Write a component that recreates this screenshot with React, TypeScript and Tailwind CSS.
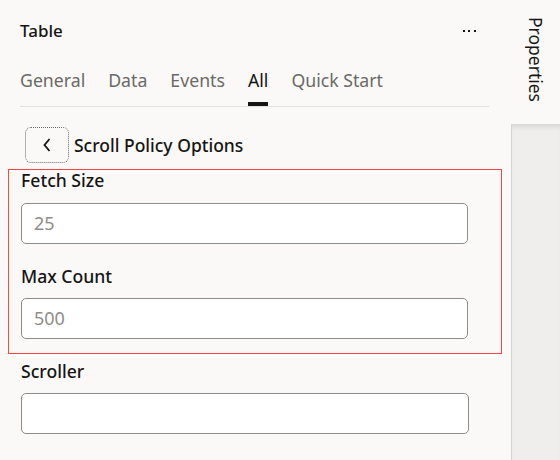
import React from "react";

const font = { fontFamily: '"Noto Sans", "Open Sans", Arial, sans-serif' };

export default function App() {
  const tabs = ["General", "Data", "Events", "All", "Quick Start"];
  return (
    <div className="w-[560px] h-[460px] flex bg-[#faf9f8] overflow-hidden text-[#161513]" style={font}>
      <div className="w-[511px] shrink-0 pl-5 pr-[22px] pt-[19px]">
        <div className="flex items-center justify-between h-[24px]">
          <div className="text-[17px] leading-[24px] font-medium">Table</div>
          <div className="w-[40px] h-[24px] flex items-center justify-center gap-[3.5px]">
            <span className="w-[2px] h-[2px] bg-[#161513]" />
            <span className="w-[2px] h-[2px] bg-[#161513]" />
            <span className="w-[2px] h-[2px] bg-[#161513]" />
          </div>
        </div>
        <div className="mt-[20px] flex gap-[23px] border-b border-[#e2e0dd]">
          {tabs.map((t) => (
            <div key={t} className="relative h-[43px] pt-[5px]">
              <span className={`text-[17.7px] leading-[24px] ${t === "All" ? "text-[#161513]" : "text-[#6b6966]"}`}>{t}</span>
              {t === "All" && <span className="absolute left-0 right-0 bottom-0 h-[4px] bg-[#161513]" />}
            </div>
          ))}
        </div>
        <div className="mt-[20px] flex items-center gap-[5px] pl-[5px]">
          <div className="w-[44px] h-[36px] rounded-[6px] border border-dotted border-[#6b6966] flex items-center justify-center">
            <svg width="10" height="16" viewBox="0 0 10 16">
              <polyline points="7.5,2 2.5,8 7.5,14" fill="none" stroke="#161513" strokeWidth="1.8" strokeLinejoin="miter" />
            </svg>
          </div>
          <div className="text-[17.5px] leading-[24px] font-medium">Scroll Policy Options</div>
        </div>
        <div className="mt-[6px] ml-[-12px] mr-[-13px] border border-[#ff4444] pl-[12px] pr-[33px] pb-[14px]">
          <div className="text-[17.6px] leading-[20px] font-medium">Fetch Size</div>
          <div className="mt-[13px] h-[41px] rounded-[5px] border border-[#8f8d8b] bg-white flex items-center pl-[12px] text-[18px] text-[#8f8c89]">25</div>
          <div className="mt-[22px] text-[17.6px] leading-[20px] font-medium">Max Count</div>
          <div className="mt-[12px] h-[41px] rounded-[5px] border border-[#8f8d8b] bg-white flex items-center pl-[12px] text-[18px] text-[#8f8c89]">500</div>
        </div>
        <div className="pl-[1px] pr-[20px]">
          <div className="mt-[7px] text-[17.6px] leading-[20px] font-medium">Scroller</div>
          <div className="mt-[12px] h-[41px] rounded-[5px] border border-[#8f8d8b] bg-white" />
        </div>
      </div>
      <div className="flex-1 flex flex-col">
        <div className="h-[124px] flex justify-center pt-[17px]">
          <div className="text-[17.5px] leading-[20px] [writing-mode:vertical-rl]">Properties</div>
        </div>
        <div className="flex-1 bg-[#efeeec] border-l border-[#d6d4d2] shadow-[inset_0_6px_6px_-4px_rgba(0,0,0,0.12)]" />
      </div>
    </div>
  );
}
